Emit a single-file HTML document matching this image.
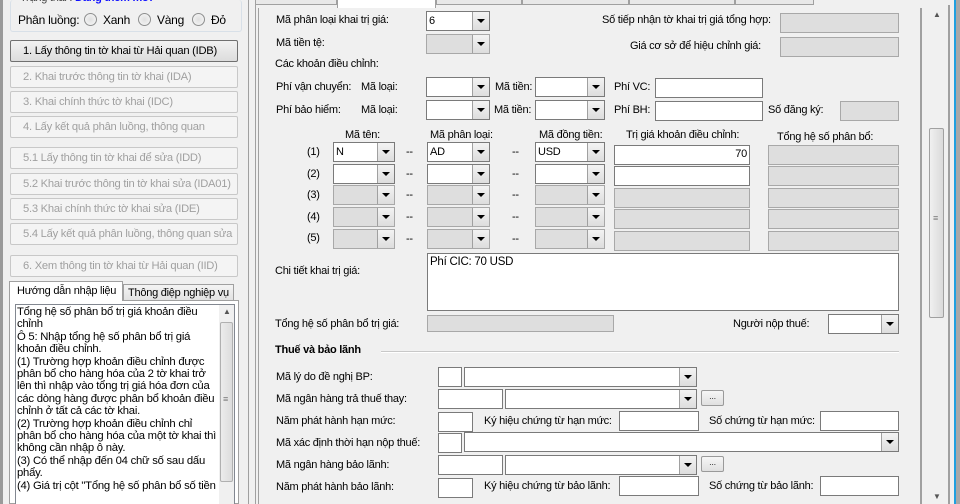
<!DOCTYPE html>
<html><head><meta charset="utf-8"><style>
*{box-sizing:border-box;margin:0;padding:0}
body{width:960px;height:504px;overflow:hidden;background:#f0f0f0;font-family:"Liberation Sans",sans-serif;font-size:11px;letter-spacing:-0.25px;color:#000;position:relative}
.a{position:absolute;white-space:nowrap}
.btn{position:absolute;left:10px;width:228px;height:22px;border:1px solid #c8c8c8;border-radius:2px;background:#f4f4f4;color:#a0a0a0;font-size:11.2px;padding:4px 0 0 12px;white-space:nowrap;overflow:hidden}
.b1{border-color:#707070;background:linear-gradient(#f2f2f2,#dcdcdc);color:#000}
.in{position:absolute;background:#fff;border:1px solid #7a7a7a;height:20px}
.g{background:#dedede;border-color:#a8a8a8}
.cb{position:absolute;border:1px solid #7a7a7a;background:#fff;height:20px;padding:3px 0 0 2px}
.cb.g{background:#dedede;border-color:#a8a8a8}
.cb:after{content:"";position:absolute;right:0;top:0;width:16px;height:18px;background:linear-gradient(#f3f3f3,#dddddd);border-left:1px solid #a0a0a0}
.cb:before{content:"";position:absolute;right:4px;top:7px;border-left:4px solid transparent;border-right:4px solid transparent;border-top:4px solid #000;z-index:2}
.r{position:absolute;width:13px;height:13px;border-radius:50%;border:1px solid #8e8f8f;background:radial-gradient(#e0e0e0,#f8f8f8)}
.dd{position:absolute;width:23px;height:16px;border:1px solid #9a9a9a;border-radius:2px;background:linear-gradient(#f6f6f6,#e0e0e0);font-size:9px;text-align:center;line-height:10px;color:#333}
</style></head><body>
<div class="a" style="left:0;top:0;width:3px;height:504px;background:#9a9a9a"></div>
<div class="a" style="left:20px;top:-8px;color:#444">Trạng thái : <b style="color:#1010ff">Đang thêm mới</b></div>
<div class="a" style="left:10px;top:0;width:232px;height:32px;border:1px solid #d8e0e8;border-top:none;border-radius:3px"></div>
<div class="a" style="left:18px;top:13px;font-size:12px">Phân luồng:</div>
<div class="r" style="left:84px;top:13px"></div><div class="a" style="left:103px;top:13px;font-size:12px">Xanh</div>
<div class="r" style="left:138px;top:13px"></div><div class="a" style="left:157px;top:13px;font-size:12px">Vàng</div>
<div class="r" style="left:192px;top:13px"></div><div class="a" style="left:211px;top:13px;font-size:12px">Đỏ</div>
<div class="btn b1" style="top:40px">1. Lấy thông tin tờ khai từ Hải quan (IDB)</div>
<div class="btn" style="top:66px">2. Khai trước thông tin tờ khai (IDA)</div>
<div class="btn" style="top:91px">3. Khai chính thức tờ khai (IDC)</div>
<div class="btn" style="top:116px">4. Lấy kết quả phân luồng, thông quan</div>
<div class="btn" style="top:147px">5.1 Lấy thông tin tờ khai để sửa (IDD)</div>
<div class="btn" style="top:173px">5.2 Khai trước thông tin tờ khai sửa (IDA01)</div>
<div class="btn" style="top:198px">5.3 Khai chính thức tờ khai sửa (IDE)</div>
<div class="btn" style="top:223px">5.4 Lấy kết quả phân luồng, thông quan sửa</div>
<div class="btn" style="top:255px">6. Xem thông tin tờ khai từ Hải quan (IID)</div>
<div class="a" style="left:9px;top:300px;width:230px;height:204px;border:1px solid #a0a0a0;background:#fff"></div>
<div class="a" style="left:123px;top:284px;width:111px;height:17px;border:1px solid #a0a0a0;background:linear-gradient(#f4f4f4,#e2e2e2);padding:2px 0 0 4px">Thông điệp nghiệp vụ</div>
<div class="a" style="left:9px;top:281px;width:114px;height:20px;border:1px solid #a0a0a0;border-bottom:none;background:#fff;padding:3px 0 0 7px">Hướng dẫn nhập liệu</div>
<div class="a" style="left:15px;top:304px;width:220px;height:200px;border:1px solid #828790;border-bottom:none;background:#fff"></div>
<div class="a" style="left:17px;top:306px;width:200px;white-space:normal;line-height:12.4px;font-size:11.3px">Tổng hệ số phân bổ trị giá khoản điều chỉnh<br>Ô 5: Nhập tổng hệ số phân bổ trị giá khoản điều chỉnh.<br>(1) Trường hợp khoản điều chỉnh được phân bổ cho hàng hóa của 2 tờ khai trở lên thì nhập vào tổng trị giá hóa đơn của các dòng hàng được phân bổ khoản điều chỉnh ở tất cả các tờ khai.<br>(2) Trường hợp khoản điều chỉnh chỉ phân bổ cho hàng hóa của một tờ khai thì không cần nhập ô này.<br>(3) Có thể nhập đến 04 chữ số sau dấu phẩy.<br>(4) Giá trị cột "Tổng hệ số phân bổ số tiền</div>
<div class="a" style="left:219px;top:305px;width:15px;height:199px;background:#f0f0f0"></div>
<div class="a" style="left:220px;top:322px;width:13px;height:160px;border:1px solid #b0b0b0;border-radius:2px;background:linear-gradient(90deg,#ececec,#dcdcdc)"></div>
<div class="a" style="left:223px;top:307px;font-size:8px;color:#555">▲</div>
<div class="a" style="left:223px;top:394px;font-size:9px;color:#777">≡</div>
<div class="a" style="left:248px;top:0;width:1px;height:504px;background:#a0a0a0"></div>

<div class="a" style="left:255px;top:0;width:82px;height:5px;border:1px solid #a0a0a0;border-top:none;background:#e8e8e8"></div>
<div class="a" style="left:337px;top:0;width:99px;height:8px;background:#fff;border-right:1px solid #a0a0a0;border-left:1px solid #a0a0a0"></div>
<div class="a" style="left:436px;top:0;width:86px;height:5px;border:1px solid #a0a0a0;border-top:none;background:#e8e8e8"></div>
<div class="a" style="left:522px;top:0;width:107px;height:5px;border:1px solid #a0a0a0;border-top:none;background:#e8e8e8"></div>
<div class="a" style="left:629px;top:0;width:106px;height:5px;border:1px solid #a0a0a0;border-top:none;background:#e8e8e8"></div>
<div class="a" style="left:735px;top:0;width:79px;height:5px;border:1px solid #a0a0a0;border-top:none;background:#e8e8e8"></div>
<div class="a" style="left:255px;top:5px;width:1px;height:499px;background:#a0a0a0"></div>
<div class="a" style="left:258px;top:8px;width:1px;height:496px;background:#a0a0a0"></div>
<div class="a" style="left:920px;top:8px;width:2px;height:496px;background:#a0a0a0"></div>
<div class="a" style="left:948px;top:5px;width:2px;height:499px;background:#a0a0a0"></div>
<div class="a" style="left:954px;top:0;width:2px;height:504px;background:#1fa0e0"></div>
<div class="a" style="left:956px;top:0;width:4px;height:504px;background:#a8a8a8"></div>
<div class="a" style="left:929px;top:128px;width:15px;height:190px;border:1px solid #a0a0a0;border-radius:2px;background:linear-gradient(90deg,#f0f0f0,#dadada)"></div>
<div class="a" style="left:933px;top:10px;font-size:8px;color:#555">▲</div>
<div class="a" style="left:933px;top:213px;font-size:9px;color:#777">≡</div>
<div class="a" style="left:933px;top:492px;font-size:8px;color:#555">▼</div>

<div class="a" style="left:276px;top:14px">Mã phân loại khai trị giá:</div>
<div class="cb" style="left:426px;top:11px;width:64px">6</div>
<div class="a" style="left:602px;top:14px">Số tiếp nhận tờ khai trị giá tổng hợp:</div>
<div class="in g" style="left:780px;top:13px;width:119px"></div>
<div class="a" style="left:276px;top:37px">Mã tiền tệ:</div>
<div class="cb g" style="left:426px;top:34px;width:64px"></div>
<div class="a" style="left:630px;top:40px">Giá cơ sở để hiệu chỉnh giá:</div>
<div class="in g" style="left:780px;top:37px;width:119px"></div>
<div class="a" style="left:275px;top:58px">Các khoản điều chỉnh:</div>

<div class="a" style="left:276px;top:81px">Phí vận chuyển:</div><div class="a" style="left:361px;top:81px">Mã loại:</div>
<div class="cb" style="left:426px;top:77px;width:64px"></div><div class="a" style="left:495px;top:81px">Mã tiền:</div>
<div class="cb" style="left:535px;top:77px;width:70px"></div><div class="a" style="left:614px;top:81px">Phí VC:</div>
<div class="in" style="left:655px;top:78px;width:108px"></div>
<div class="a" style="left:276px;top:104px">Phí bảo hiểm:</div><div class="a" style="left:361px;top:104px">Mã loại:</div>
<div class="cb" style="left:426px;top:100px;width:64px"></div><div class="a" style="left:494px;top:104px">Mã tiền:</div>
<div class="cb" style="left:535px;top:100px;width:70px"></div><div class="a" style="left:614px;top:104px">Phí BH:</div>
<div class="in" style="left:655px;top:101px;width:108px"></div>
<div class="a" style="left:768px;top:104px">Số đăng ký:</div>
<div class="in g" style="left:840px;top:101px;width:59px"></div>

<div class="a" style="left:345px;top:129px">Mã tên:</div>
<div class="a" style="left:430px;top:129px">Mã phân loại:</div>
<div class="a" style="left:539px;top:129px">Mã đồng tiền:</div>
<div class="a" style="left:626px;top:129px">Trị giá khoản điều chỉnh:</div>
<div class="a" style="left:777px;top:131px">Tổng hệ số phân bổ:</div>

<div class="a" style="left:307px;top:146px">(1)</div><div class="cb" style="left:333px;top:142px;width:62px">N</div><div class="a" style="left:406px;top:146px">--</div><div class="cb" style="left:427px;top:142px;width:63px">AD</div><div class="a" style="left:512px;top:146px">--</div><div class="cb" style="left:535px;top:142px;width:70px">USD</div><div class="in" style="left:614px;top:145px;width:136px;text-align:right;padding:2px 2px 0 0">70</div><div class="in g" style="left:768px;top:145px;width:131px"></div>
<div class="a" style="left:307px;top:168px">(2)</div><div class="cb" style="left:333px;top:164px;width:62px"></div><div class="a" style="left:406px;top:168px">--</div><div class="cb" style="left:427px;top:164px;width:63px"></div><div class="a" style="left:512px;top:168px">--</div><div class="cb" style="left:535px;top:164px;width:70px"></div><div class="in" style="left:614px;top:166px;width:136px"></div><div class="in g" style="left:768px;top:166px;width:131px"></div>
<div class="a" style="left:307px;top:189px">(3)</div><div class="cb g" style="left:333px;top:185px;width:62px"></div><div class="a" style="left:406px;top:189px">--</div><div class="cb g" style="left:427px;top:185px;width:63px"></div><div class="a" style="left:512px;top:189px">--</div><div class="cb g" style="left:535px;top:185px;width:70px"></div><div class="in g" style="left:614px;top:188px;width:136px"></div><div class="in g" style="left:768px;top:188px;width:131px"></div>
<div class="a" style="left:307px;top:211px">(4)</div><div class="cb g" style="left:333px;top:207px;width:62px"></div><div class="a" style="left:406px;top:211px">--</div><div class="cb g" style="left:427px;top:207px;width:63px"></div><div class="a" style="left:512px;top:211px">--</div><div class="cb g" style="left:535px;top:207px;width:70px"></div><div class="in g" style="left:614px;top:209px;width:136px"></div><div class="in g" style="left:768px;top:209px;width:131px"></div>
<div class="a" style="left:307px;top:232px">(5)</div><div class="cb g" style="left:333px;top:229px;width:62px"></div><div class="a" style="left:406px;top:233px">--</div><div class="cb g" style="left:427px;top:229px;width:63px"></div><div class="a" style="left:512px;top:233px">--</div><div class="cb g" style="left:535px;top:229px;width:70px"></div><div class="in g" style="left:614px;top:231px;width:136px"></div><div class="in g" style="left:768px;top:231px;width:131px"></div>

<div class="a" style="left:275px;top:265px">Chi tiết khai trị giá:</div>
<div class="in" style="left:427px;top:253px;width:472px;height:58px;padding:2px 2px;font-size:11.5px">Phí CIC: 70 USD</div>
<div class="a" style="left:275px;top:318px">Tổng hệ số phân bổ trị giá:</div>
<div class="in g" style="left:427px;top:315px;width:187px;height:17px"></div>
<div class="a" style="left:733px;top:318px">Người nộp thuế:</div>
<div class="cb" style="left:828px;top:314px;width:71px"></div>
<div class="a" style="left:275px;top:344px;font-weight:bold">Thuế và bảo lãnh</div>
<div class="a" style="left:381px;top:351px;width:518px;height:2px;border-top:1px solid #c8c8c8;border-bottom:1px solid #fff"></div>

<div class="a" style="left:276px;top:371px">Mã lý do đề nghị BP:</div>
<div class="in" style="left:438px;top:367px;width:24px"></div><div class="cb" style="left:464px;top:367px;width:233px"></div>
<div class="a" style="left:276px;top:393px">Mã ngân hàng trả thuế thay:</div>
<div class="in" style="left:438px;top:389px;width:65px"></div><div class="cb" style="left:505px;top:389px;width:192px"></div><div class="dd" style="left:701px;top:390px">...</div>
<div class="a" style="left:276px;top:415px">Năm phát hành hạn mức:</div>
<div class="in" style="left:438px;top:412px;width:35px"></div><div class="a" style="left:484px;top:415px">Ký hiệu chứng từ hạn mức:</div>
<div class="in" style="left:619px;top:411px;width:80px"></div><div class="a" style="left:709px;top:415px">Số chứng từ hạn mức:</div>
<div class="in" style="left:820px;top:411px;width:79px"></div>
<div class="a" style="left:276px;top:437px">Mã xác định thời hạn nộp thuế:</div>
<div class="in" style="left:438px;top:433px;width:24px"></div><div class="cb" style="left:464px;top:432px;width:435px"></div>
<div class="a" style="left:276px;top:459px">Mã ngân hàng bảo lãnh:</div>
<div class="in" style="left:438px;top:455px;width:65px"></div><div class="cb" style="left:505px;top:455px;width:192px"></div><div class="dd" style="left:701px;top:456px">...</div>
<div class="a" style="left:276px;top:481px">Năm phát hành bảo lãnh:</div>
<div class="in" style="left:438px;top:478px;width:35px"></div><div class="a" style="left:484px;top:480px">Ký hiệu chứng từ bảo lãnh:</div>
<div class="in" style="left:619px;top:476px;width:80px"></div><div class="a" style="left:709px;top:480px">Số chứng từ bảo lãnh:</div>
<div class="in" style="left:820px;top:476px;width:79px"></div>
</body></html>
